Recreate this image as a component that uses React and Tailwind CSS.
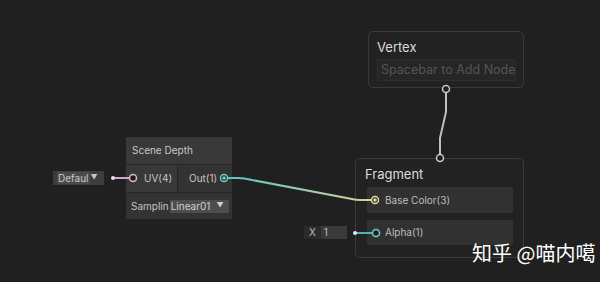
import React from "react";

// Shader graph canvas: master stack (Vertex / Fragment) and a Scene Depth node
function Port({ x, y, color = "#c8c8c8", filled = false }) {
  return (
    <g>
      <circle cx={x} cy={y} r="3.5" fill="#1e1e1e" stroke={color} strokeWidth="1.5" />
      {filled && <circle cx={x} cy={y} r="1.8" fill={color} />}
    </g>
  );
}

export default function App() {
  return (
    <div
      className="relative w-[600px] h-[282px] overflow-hidden bg-[#202020] text-[#c4c4c4]"
      style={{ fontFamily: "Inter, 'Noto Sans', sans-serif" }}
    >
      {/* Vertex block */}
      <div className="absolute left-[368px] top-[31px] w-[156px] h-[57px] rounded-[5px] border border-[#3a3a3a] bg-[#222222] px-[8px] pt-[6px]">
        <div className="text-[13px] leading-[18px] text-[#dcdcdc]">Vertex</div>
        <div className="mt-[3px] h-[22px] w-[139px] overflow-hidden whitespace-nowrap rounded-[2px] border border-[#2e2e2e] bg-[#262626] pl-[3px] text-[12.5px] leading-[20px] text-[#555555]">
          Spacebar to Add Node
        </div>
      </div>

      {/* Fragment block */}
      <div className="absolute left-[355px] top-[158px] w-[169px] h-[100px] rounded-[5px] border border-[#3a3a3a] bg-[#222222] pl-[11px] pt-[6px]">
        <div className="-ml-[2px] text-[13px] leading-[18px] text-[#dcdcdc]">Fragment</div>
        <div className="mt-[4px] flex flex-col gap-[7px]">
          <div className="h-[26px] w-[146px] bg-[#313131] pl-[18px] text-[10px] leading-[26px] text-[#bdbdbd]">
            Base Color(3)
          </div>
          <div className="h-[25px] w-[146px] bg-[#313131] pl-[18px] text-[10px] leading-[25px] text-[#bdbdbd]">
            Alpha(1)
          </div>
        </div>
      </div>

      {/* Alpha inline value */}
      <div className="absolute left-[304px] top-[226px] flex h-[13px] items-center bg-[#2b2b2b] text-[10px] text-[#bdbdbd]">
        <span className="px-[5px]">X</span>
        <span className="h-[13px] w-[26px] bg-[#3a3a3a] pl-[3px] leading-[13px]">1</span>
      </div>

      {/* Scene Depth node */}
      <div className="absolute left-[126px] top-[137px] flex w-[106px] flex-col bg-[#262626]">
        <div className="h-[27px] bg-[#393939] pl-[6px] text-[10px] leading-[27px] text-[#c8c8c8]">
          Scene Depth
        </div>
        <div className="mt-px flex h-[27px] gap-px">
          <div className="w-[51px] bg-[#383838] pl-[18px] text-[10px] leading-[27px] text-[#c4c4c4]">UV(4)</div>
          <div className="flex-1 bg-[#333333] pl-[11px] text-[10px] leading-[27px] text-[#c4c4c4]">Out(1)</div>
        </div>
        <div className="mt-px flex h-[26px] items-center bg-[#333333] pl-[5px] text-[10px] text-[#c4c4c4]">
          <span>Samplin</span>
          <span className="ml-[1px] flex h-[13px] w-[59px] items-center justify-between bg-[#4d4d4d] pl-[1px] pr-[5px] text-[#d0d0d0]">
            Linear01 <span className="text-[7px]">▼</span>
          </span>
        </div>
      </div>

      {/* Default dropdown */}
      <div className="absolute left-[53px] top-[171px] flex h-[14px] w-[51px] items-center bg-[#3c3c3c] pl-[4px] text-[10px] text-[#c8c8c8]">
        <span className="bg-[#4a4a4a] px-[1px] leading-[12px]">Defaul</span>
        <span className="ml-[1px] text-[7px]">▼</span>
      </div>

      {/* Wires and ports */}
      <svg className="absolute left-0 top-0" width="600" height="282">
        <defs>
          <linearGradient id="cy" x1="225" y1="0" x2="372" y2="0" gradientUnits="userSpaceOnUse">
            <stop offset="0" stopColor="#58c4be" />
            <stop offset="1" stopColor="#d6d49a" />
          </linearGradient>
        </defs>
        <path d="M446 92 L446 112 L440 138 L440 155" fill="none" stroke="#c0c0c0" strokeWidth="2" />
        <path d="M226 178 L238 178 Q244 178 252 180 L352 199 Q356 200 360 200 L372 200" fill="none" stroke="url(#cy)" strokeWidth="2" />
        <path d="M113 178 L131 178" stroke="#d6a6c8" strokeWidth="2" />
        <circle cx="113" cy="178" r="2" fill="#e8e0e8" />
        <path d="M356 233 L374 233" stroke="#4fb4b0" strokeWidth="2" />
        <circle cx="355" cy="233" r="2" fill="#d8ecec" />
        <Port x={446} y={89} color="#c8c8c8" />
        <Port x={440} y={158} color="#c8c8c8" />
        <Port x={133} y={178} color="#e0b8d6" />
        <Port x={224} y={178} color="#6fd0cc" filled />
        <Port x={375} y={200} color="#e0dd9c" filled />
        <Port x={376} y={233} color="#6fd0cc" />
      </svg>

      {/* Watermark */}
      <div
        className="absolute left-[472px] top-[242px] whitespace-nowrap text-[20px] leading-[22px] text-white"
        style={{ fontFamily: "'Noto Sans CJK SC', sans-serif" }}
      >
        知乎 @喵内噶
      </div>
    </div>
  );
}
